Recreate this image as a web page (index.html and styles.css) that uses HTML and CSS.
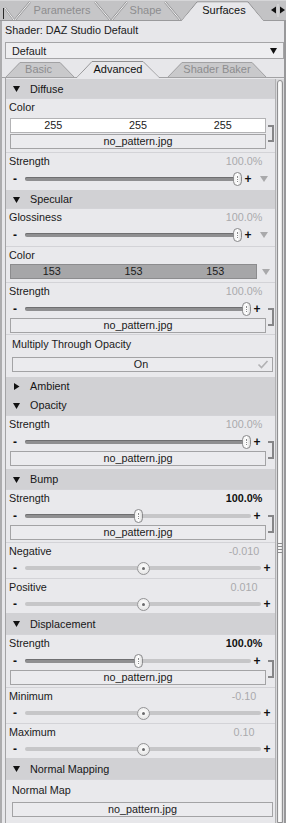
FILE: index.html
```html
<!DOCTYPE html>
<html>
<head>
<meta charset="utf-8">
<link rel="stylesheet" href="styles.css">
</head>
<body>
<div class="window">
  <div class="tabbar">
    <svg class="tabshape" width="286" height="21" viewBox="0 0 286 21">
      <rect x="0" y="0" width="286" height="21" fill="#c3c3c5"/>
      <line x1="0" y1="0.5" x2="286" y2="0.5" stroke="#d6d6d8"/>
      <line x1="3.5" y1="8" x2="3.5" y2="19" stroke="#2a2a2a"/>
      <polygon points="14,21 30,2 95,2 111,21" fill="#c6c6c8"/>
      <polygon points="111,21 127,2 165,2 181,21" fill="#c6c6c8"/>
      <g fill="none" stroke="#909092" stroke-width="2">
        <polyline points="5,8 14,20"/>
        <polyline points="14,21 30,2"/>
        <polyline points="95,2 111,21 127,2"/>
        <polyline points="165,2 181,21"/>
      </g>
      <g fill="none" stroke="#f4f4f5" stroke-width="1">
        <polyline points="5,8 14,20"/>
        <polyline points="14,21 30,2"/>
        <polyline points="95,2 111,21 127,2"/>
        <polyline points="165,2 181,21"/>
      </g>
      <line x1="0" y1="20.5" x2="286" y2="20.5" stroke="#9a9a9c"/>
      <polygon points="181,21.5 197,2 248,2 264,21.5" fill="#e7e7ea" stroke="#8e8e90" stroke-width="1"/>
      <polygon points="181.5,21 197.5,2.5 247.5,2.5 263.5,21" fill="#e7e7ea"/>
      <polygon points="271,10 276,6.5 276,13.5" fill="#111"/>
      <line x1="278" y1="4" x2="278" y2="17" stroke="#e0e0e0"/>
      <polygon points="280,6.5 285,10 280,13.5" fill="#111"/>
    </svg>
    <div class="tablabels">
      <span class="tab w1">Parameters</span>
      <span class="tab w2">Shape</span>
      <span class="tab w3 active">Surfaces</span>
    </div>
  </div>

  <div class="pane">
    <div class="shader">Shader: DAZ Studio Default</div>
    <div class="dropdown">
      <span>Default</span>
      <svg class="dd-arrow" width="7" height="6" viewBox="0 0 7 6"><path d="M0 0H7L3.5 6Z" fill="#111"/></svg>
    </div>
    <div class="subtabs">
      <svg class="subshape" width="282" height="18" viewBox="2 60 282 18">
        <polygon points="5,78 20,62 60,62 75,78" fill="#c9c9cb"/>
        <polygon points="167,78 182,62 252,62 267,78" fill="#c9c9cb"/>
        <g fill="none" stroke="#a2a2a4" stroke-width="1">
          <polyline points="5,78 20,62.5 60,62.5 75,78"/>
          <polyline points="167,78 182,62.5 252,62.5 267,78"/>
        </g>
        <line x1="2" y1="77.5" x2="284" y2="77.5" stroke="#a2a2a4"/>
        <polygon points="76,78.5 92,61.5 143,61.5 160,78.5" fill="#e7e7ea" stroke="#909092"/>
        <polygon points="76.8,78 92.4,62 142.6,62 159.2,78" fill="#e7e7ea"/>
      </svg>
      <div class="sublabels">
        <span class="stab s1">Basic</span>
        <span class="stab s2 active">Advanced</span>
        <span class="stab s3">Shader Baker</span>
      </div>
    </div>

    <div class="content">
      <div class="list">
        <div class="hdr"><svg class="tri" width="7" height="6" viewBox="0 0 7 6"><path d="M0 0H7L3.5 6Z"/></svg><span>Diffuse</span></div>
        <div class="row r-colorfile">
          <div class="lbl"><span>Color</span></div>
          <div class="pair">
            <div class="stack">
              <div class="field rgb white"><span>255</span><span>255</span><span>255</span></div>
              <div class="field file">no_pattern.jpg</div>
            </div>
            <div class="bracket b-fields"></div>
          </div>
        </div>
        <div class="row r-slider">
          <div class="lbl"><span>Strength</span><span class="val">100.0%</span></div>
          <div class="slider">
            <span class="minus">-</span>
            <div class="track"><div class="fill" style="--p:1"></div><div class="knob"></div><div class="rest"></div></div>
            <span class="plus">+</span>
            <span class="aux"><svg width="8" height="6" viewBox="0 0 8 6"><path d="M0 0H8L4 6Z"/></svg></span>
          </div>
        </div>

        <div class="hdr h18"><svg class="tri" width="7" height="6" viewBox="0 0 7 6"><path d="M0 0H7L3.5 6Z"/></svg><span>Specular</span></div>
        <div class="row r-slider">
          <div class="lbl"><span>Glossiness</span><span class="val">100.0%</span></div>
          <div class="slider">
            <span class="minus">-</span>
            <div class="track"><div class="fill" style="--p:1"></div><div class="knob"></div><div class="rest"></div></div>
            <span class="plus">+</span>
            <span class="aux"><svg width="8" height="6" viewBox="0 0 8 6"><path d="M0 0H8L4 6Z"/></svg></span>
          </div>
        </div>
        <div class="row r-color">
          <div class="lbl"><span>Color</span></div>
          <div class="colorline">
            <div class="field rgb gray"><span>153</span><span>153</span><span>153</span></div>
            <span class="aux aux-c"><svg width="8" height="6" viewBox="0 0 8 6"><path d="M0 0H8L4 6Z"/></svg></span>
          </div>
        </div>
        <div class="row r-sliderfile r-spec">
          <div class="lbl"><span>Strength</span><span class="val">100.0%</span></div>
          <div class="pair">
            <div class="stack">
              <div class="slider s-br">
                <span class="minus">-</span>
                <div class="track"><div class="fill" style="--p:1"></div><div class="knob"></div><div class="rest"></div></div>
                <span class="plus">+</span>
              </div>
              <div class="field file">no_pattern.jpg</div>
            </div>
            <div class="bracket b-slider"></div>
          </div>
        </div>
        <div class="row r-wide">
          <div class="lbl"><span>Multiply Through Opacity</span></div>
          <div class="field choice">
            <span class="pad"></span><span class="choice-text">On</span>
            <svg class="check" width="12" height="9" viewBox="0 0 12 9"><path d="M1.5 4.5L4.5 7.5L10.5 1" fill="none" stroke="#b2b2b4" stroke-width="1.6"/></svg>
          </div>
        </div>

        <div class="hdr h18"><svg class="tri" width="7" height="7" viewBox="0 0 7 7"><path d="M1 0L6.5 3.5L1 7Z"/></svg><span>Ambient</span></div>
        <div class="hdr h20"><svg class="tri" width="7" height="6" viewBox="0 0 7 6"><path d="M0 0H7L3.5 6Z"/></svg><span>Opacity</span></div>
        <div class="row r-sliderfile r-opac">
          <div class="lbl"><span>Strength</span><span class="val">100.0%</span></div>
          <div class="pair">
            <div class="stack">
              <div class="slider s-br">
                <span class="minus">-</span>
                <div class="track"><div class="fill" style="--p:1"></div><div class="knob"></div><div class="rest"></div></div>
                <span class="plus">+</span>
              </div>
              <div class="field file">no_pattern.jpg</div>
            </div>
            <div class="bracket b-slider"></div>
          </div>
        </div>

        <div class="hdr h20"><svg class="tri" width="7" height="6" viewBox="0 0 7 6"><path d="M0 0H7L3.5 6Z"/></svg><span>Bump</span></div>
        <div class="row r-sliderfile">
          <div class="lbl"><span>Strength</span><span class="val strong">100.0%</span></div>
          <div class="pair">
            <div class="stack">
              <div class="slider s-br">
                <span class="minus">-</span>
                <div class="track"><div class="fill" style="--p:0.5"></div><div class="knob"></div><div class="rest"></div></div>
                <span class="plus">+</span>
              </div>
              <div class="field file">no_pattern.jpg</div>
            </div>
            <div class="bracket b-slider"></div>
          </div>
        </div>
        <div class="row r-small">
          <div class="lbl"><span>Negative</span><span class="val">-0.010</span></div>
          <div class="slider s-full">
            <span class="minus">-</span>
            <div class="track light"><div class="fill" style="--p:0.5"></div><div class="knob round"></div><div class="rest"></div></div>
            <span class="plus">+</span>
          </div>
        </div>
        <div class="row r-small r-last">
          <div class="lbl"><span>Positive</span><span class="val">0.010</span></div>
          <div class="slider s-full">
            <span class="minus">-</span>
            <div class="track light"><div class="fill" style="--p:0.5"></div><div class="knob round"></div><div class="rest"></div></div>
            <span class="plus">+</span>
          </div>
        </div>

        <div class="hdr h21"><svg class="tri" width="7" height="6" viewBox="0 0 7 6"><path d="M0 0H7L3.5 6Z"/></svg><span>Displacement</span></div>
        <div class="row r-sliderfile">
          <div class="lbl"><span>Strength</span><span class="val strong">100.0%</span></div>
          <div class="pair">
            <div class="stack">
              <div class="slider s-br">
                <span class="minus">-</span>
                <div class="track"><div class="fill" style="--p:0.5"></div><div class="knob"></div><div class="rest"></div></div>
                <span class="plus">+</span>
              </div>
              <div class="field file">no_pattern.jpg</div>
            </div>
            <div class="bracket b-slider"></div>
          </div>
        </div>
        <div class="row r-small">
          <div class="lbl"><span>Minimum</span><span class="val">-0.10</span></div>
          <div class="slider s-full">
            <span class="minus">-</span>
            <div class="track light"><div class="fill" style="--p:0.5"></div><div class="knob round"></div><div class="rest"></div></div>
            <span class="plus">+</span>
          </div>
        </div>
        <div class="row r-small r-last">
          <div class="lbl"><span>Maximum</span><span class="val">0.10</span></div>
          <div class="slider s-full">
            <span class="minus">-</span>
            <div class="track light"><div class="fill" style="--p:0.5"></div><div class="knob round"></div><div class="rest"></div></div>
            <span class="plus">+</span>
          </div>
        </div>

        <div class="hdr h21"><svg class="tri" width="7" height="6" viewBox="0 0 7 6"><path d="M0 0H7L3.5 6Z"/></svg><span>Normal Mapping</span></div>
        <div class="row r-wide r-normal">
          <div class="lbl"><span>Normal Map</span></div>
          <div class="field file">no_pattern.jpg</div>
        </div>
      </div>
      <div class="scrollbar"><div class="thumb"><div class="grip"></div></div></div>
    </div>
  </div>
</div>
</body>
</html>
```
FILE: styles.css
```css
* { box-sizing: border-box; }

body {
  margin: 0;
  background: #c3c3c5;
  font-family: "Liberation Sans", Arial, sans-serif;
  font-size: 10.8px;
  color: #1a1a1a;
}

.window {
  width: 286px;
  height: 823px;
  overflow: hidden;
  display: flex;
  flex-direction: column;
}

/* top tabs */
.tabbar {
  display: grid;
  height: 21px;
  flex: none;
}
.tabbar > * { grid-area: 1 / 1; }
.tabshape { display: block; }
.tablabels {
  display: flex;
  padding-left: 14px;
  line-height: 20px;
  font-size: 11px;
}
.tab { text-align: center; color: #8d8d8f; }
.tab.active { color: #111; }
.w1 { width: 96px; }
.w2 { width: 71px; }
.w3 { width: 86px; }

/* pane */
.pane {
  flex: 1;
  display: flex;
  flex-direction: column;
  background: #e7e7ea;
  border-left: 2px solid #acacae;
  border-right: 2px solid #98989a;
  min-height: 0;
}
.shader {
  height: 19px;
  line-height: 19px;
  padding-left: 3px;
  flex: none;
}
.dropdown {
  flex: none;
  margin: 2px 0 0 3px;
  height: 17px;
  border: 1px solid #a5a5a7;
  background: #eeeef0;
  display: flex;
  align-items: center;
  justify-content: space-between;
  padding: 0 6px 0 6px;
}
.dd-arrow { display: block; }

.subtabs {
  flex: none;
  margin-top: 1px;
  height: 18px;
  display: grid;
}
.subtabs > * { grid-area: 1 / 1; }
.subshape { display: block; }
.sublabels {
  display: flex;
  padding-left: 3px;
  line-height: 18px;
  font-size: 11px;
}
.stab { text-align: center; color: #8d8d8f; }
.stab.active { color: #111; }
.s1 { width: 67px; }
.s2 { width: 92px; }
.s3 { width: 106px; }

/* content */
.content {
  flex: 1;
  min-height: 0;
  display: flex;
  margin-left: 3px;
  padding-top: 1px;
  border-left: 1px solid #a3a3a5;
}
.list {
  flex: 1;
  min-width: 0;
  display: flex;
  flex-direction: column;
  overflow: hidden;
}

.hdr {
  flex: none;
  height: 19px;
  background: #d1d1d4;
  display: flex;
  align-items: center;
  padding-left: 7px;
  gap: 10px;
  color: #161616;
}
.hdr.h18 { height: 18px; }
.hdr.h20 { height: 20px; }
.hdr.h21 { height: 21px; }
.tri { display: block; fill: #111; margin-top: 1px; }

.row {
  flex: none;
  background: #e9e9ec;
  border-top: 1px solid #d3d3d7;
  padding: 0 1px 0 4px;
}
.r-colorfile { padding-bottom: 3px; }
.r-slider { padding-bottom: 3px; }
.r-color { padding-bottom: 3px; }
.r-sliderfile { padding-bottom: 2px; }
.r-sliderfile.r-spec { padding-bottom: 1px; }
.r-sliderfile.r-opac { padding-bottom: 3px; }
.r-small { padding-bottom: 2px; }
.r-small.r-last { padding-bottom: 1px; }
.r-wide { padding: 1px 2px 5px 6px; }
.r-wide .field { margin-top: 4px; }
.r-normal { padding: 2px 2px 3px 6px; }
.r-normal .field { margin-top: 3px; }

.lbl {
  height: 17px;
  line-height: 17px;
  display: flex;
  justify-content: space-between;
  margin-left: -1px;
}
.r-wide .lbl { margin-left: 0; }
.val {
  width: 40px;
  margin-right: 10px;
  text-align: center;
  color: #aaaaac;
}
.val.strong { color: #111; font-weight: bold; }

.pair { display: flex; }
.r-colorfile .pair { margin-top: 2px; }
.stack {
  flex: 1;
  min-width: 0;
  display: flex;
  flex-direction: column;
  gap: 1px;
}
.bracket {
  flex: none;
  width: 6px;
  margin-left: 2px;
  border: 2px solid #868688;
  border-left: 0;
}
.b-fields { margin-top: 7px; margin-bottom: 7px; }
.b-slider { margin-top: 8px; margin-bottom: 7px; }

.field {
  height: 15px;
  border: 1px solid #a3a3a5;
  line-height: 13px;
  text-align: center;
  background: #ebebee;
}
.rgb { display: flex; }
.rgb span { flex: 1; text-align: center; }
.white { background: #fff; border-color: #b3b3b5; }
.gray { background: #a6a6a8; border-color: #8c8c8e; }
.choice { display: flex; }
.pad { width: 12px; }
.choice-text { flex: 1; text-align: center; }
.check { margin: 2px 3px 0 0; display: block; }

.colorline { display: flex; align-items: center; }
.colorline .field { flex: 1; }

/* sliders */
.slider {
  height: 17px;
  display: flex;
  align-items: center;
}
.r-small .slider { height: 16px; }
.minus {
  width: 15px;
  padding-left: 3px;
  font-weight: bold;
  font-size: 12px;
  line-height: 12px;
  color: #111;
}
.plus {
  width: 12px;
  text-align: center;
  font-weight: bold;
  font-size: 12px;
  line-height: 12px;
  color: #111;
}
.s-br { padding-right: 3px; }
.s-full { padding-right: 1px; }
.aux {
  width: 20px;
  display: flex;
  justify-content: center;
  fill: #a9a9ab;
}
.aux svg { display: block; }
.aux-c { width: 17px; }

.track {
  flex: 1;
  display: flex;
  align-items: center;
  height: 17px;
}
.fill {
  width: calc((100% - 9px) * var(--p));
  height: 4px;
  border-radius: 2px 0 0 2px;
  background: #8f8f91;
  box-shadow: inset 0 1px 0 #6f6f71;
}
.rest {
  flex: 1;
  height: 4px;
  border-radius: 0 2px 2px 0;
  background: #c6c6c8;
}
.knob {
  flex: none;
  width: 9px;
  height: 14px;
  border: 1px solid #8a8a8c;
  border-radius: 5px;
  background: linear-gradient(90deg, #f0f0f0, #ffffff 50%, #dcdcdc);
  display: flex;
  align-items: center;
  justify-content: center;
}
.knob::after {
  content: "";
  width: 0;
  height: 6px;
  border-left: 1px dotted #8a8a8c;
}
.track.light .fill {
  width: calc((100% - 13px) * var(--p));
  background: #c6c6c8;
  box-shadow: none;
}
.knob.round {
  width: 13px;
  height: 13px;
  border-radius: 50%;
  border-color: #939395;
  background: radial-gradient(circle at 50% 40%, #ffffff, #dedede);
}
.knob.round::after {
  width: 3px;
  height: 3px;
  border: 0;
  border-radius: 50%;
  background: #6a6a6c;
}

/* scrollbar */
.scrollbar {
  flex: none;
  width: 9px;
  background: #d8d8da;
  border-left: 1px solid #b2b2b4;
  display: flex;
  padding: 1px 1px 0 1px;
}
.thumb {
  flex: 1;
  border: 1px solid #909092;
  border-radius: 4px 4px 0 0;
  background: linear-gradient(90deg, #eeeeee, #ffffff 50%, #dadada);
  display: flex;
  justify-content: center;
}
.grip {
  margin-top: 462px;
  width: 4px;
  height: 10px;
  background: repeating-linear-gradient(#8a8a8c 0 1px, transparent 1px 3px);
}
```
